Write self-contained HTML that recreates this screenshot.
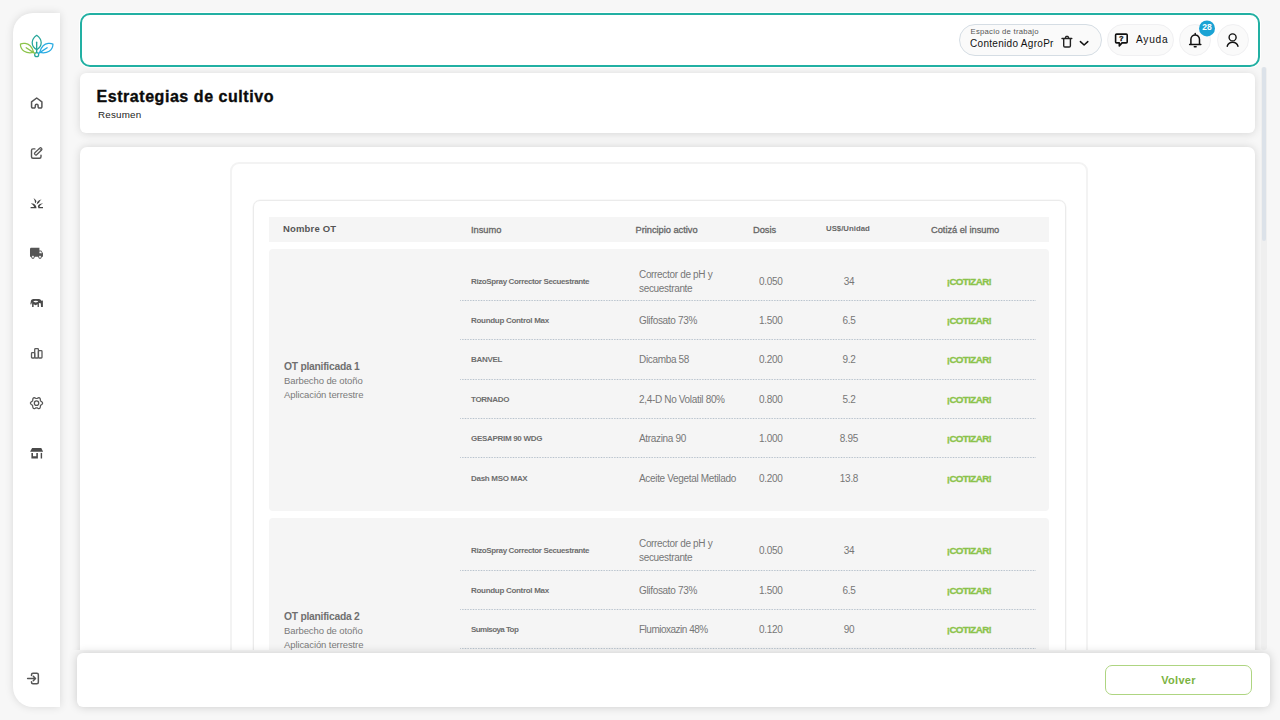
<!DOCTYPE html>
<html lang="es">
<head>
<meta charset="utf-8">
<title>Estrategias de cultivo</title>
<style>
*{box-sizing:border-box;margin:0;padding:0}
html,body{width:1280px;height:720px;overflow:hidden;background:#f7f7f7;font-family:"Liberation Sans",sans-serif;color:#111}
#sidebar{position:absolute;left:13px;top:13px;width:47px;height:694px;background:#fff;border-radius:20px 0 0 20px;box-shadow:0 0 8px rgba(0,0,0,.13)}
#sidebar svg{position:absolute;display:block}
#header{position:absolute;left:80px;top:13px;width:1180px;height:54px;background:#fff;border:2px solid #22b0a3;border-radius:10px;box-shadow:0 0 0 1px rgba(255,255,255,.9)}

#header .pill{position:absolute;top:9px;height:32px;border-radius:16px;background:#fafafa;border:1px solid #f0f0f2}
#ws{left:877px;width:143px;border-color:#d5dde4 !important}
#ws .lbl{position:absolute;left:10.5px;top:2px;font-size:7.7px;line-height:9px;color:#555;white-space:nowrap;letter-spacing:.26px}
#ws .val{position:absolute;left:10px;top:12px;width:84px;overflow:hidden;font-size:10px;line-height:14px;color:#111;white-space:nowrap;letter-spacing:.3px}
#help{left:1025px;width:67px}
#help span{position:absolute;left:28px;top:7.9px;font-size:10.2px;line-height:14px;color:#111;letter-spacing:.72px}
#bell{left:1097px;width:32px}
#user{left:1135px;width:32px}
#badge{position:absolute;left:1117px;top:5px;transform:translateY(.45px);width:16px;height:16px;border-radius:8px;background:#1aa3d4;color:#fff;font-weight:bold;font-size:8.5px;line-height:15.4px;text-align:center;letter-spacing:-.1px}
#hicons{position:absolute;left:-82px;top:-15px;width:1280px;height:80px;pointer-events:none}
#scroll{position:absolute;left:66px;top:67px;width:1204px;height:583px;overflow:hidden}
#titlecard{position:absolute;left:14px;top:6px;width:1175px;height:60px;background:#fff;border-radius:6px;box-shadow:0 1px 9px rgba(0,0,0,.13)}
#maincard{position:absolute;left:14px;top:80px;width:1175px;height:640px;background:#fff;border-radius:7px;box-shadow:0 0 8px rgba(0,0,0,.14)}

#titlecard h1{position:absolute;left:16.5px;top:14px;font-size:16px;line-height:20px;font-weight:bold;color:#0b0b0b;white-space:nowrap;letter-spacing:.55px;-webkit-text-stroke:.35px #0b0b0b}
#titlecard p{position:absolute;left:18px;top:35px;font-size:9.8px;line-height:14px;color:#222;white-space:nowrap;letter-spacing:.2px}
#card1{position:absolute;left:150px;top:15px;width:858px;height:700px;border:2px solid #f3f3f3;border-radius:9px}
#card2{position:absolute;left:21px;top:36px;width:813px;height:700px;border:1px solid #ebebeb;border-radius:7px;box-shadow:0 0 0 .5px #f3f3f3}
#thead{position:absolute;left:15px;top:16px;width:780px;height:25px;background:#f5f5f5;font-size:9.3px;line-height:26px;color:#666;-webkit-text-stroke:.3px #666;letter-spacing:-.03px}
#thead .pop{font-weight:bold;font-size:9.5px;line-height:24px;letter-spacing:.17px;-webkit-text-stroke:0;color:#555}
#thead span{position:absolute;top:0;white-space:nowrap}
.blk{position:absolute;left:15px;width:780px;background:#f5f5f5;border-radius:4px;padding-top:12.7px}
.ot{position:absolute;left:15px;color:#7a7a7a;font-size:9.5px;line-height:14px;white-space:nowrap;letter-spacing:-.1px;margin-top:1px}
.ot b{display:block;font-size:10.3px;line-height:15px;color:#707070;letter-spacing:-.25px}
.row{position:relative;margin-left:191px;width:576px;height:39.3px;border-bottom:1px solid transparent;font-size:10px;letter-spacing:-.3px;color:#777}
.row::after{content:"";position:absolute;left:.4px;right:0;bottom:-1px;height:1px;background:repeating-linear-gradient(90deg,rgba(128,148,168,.52) 0,rgba(128,148,168,.52) .3px,rgba(128,148,168,0) 1.5px,rgba(128,148,168,.52) 2.667px)}
.row.last::after{display:none}
.row.last span{margin-top:.8px}
.row span{position:absolute;white-space:nowrap;top:calc(50% + 1px);transform:translateY(-50%);line-height:14px}
.row .c1{left:11px;font-size:8px;font-weight:bold;color:#6e6e6e;letter-spacing:-.3px}
.row .c2{left:179px;letter-spacing:-.33px}
.row .c3{left:299px}
.row .c4{left:339px;width:100px;text-align:center}
.row .c5{left:459px;width:100px;text-align:center;font-weight:bold;color:#8bc34a;letter-spacing:-.62px;font-size:9.8px;-webkit-text-stroke:.3px #8bc34a}
#track{position:absolute;left:1261px;top:67px;width:6px;height:583px;border-radius:3px;background:#efefef}
#thumb{position:absolute;left:1262px;top:67px;width:4px;height:174px;border-radius:2px;background:#dce2e9}
#footer{position:absolute;left:77px;top:653px;width:1193px;height:54px;background:#fff;border-radius:6px;box-shadow:0 0 10px rgba(0,0,0,.18)}
#volver{position:absolute;left:1028px;top:12px;width:147px;height:30px;border:1px solid #aed581;border-radius:7px;color:#7cb342;font-weight:bold;font-size:11px;line-height:28px;text-align:center;letter-spacing:.3px}
</style>
</head>
<body>
<div id="sidebar">
<svg viewBox="13 13 47 694" width="47" height="694" style="left:0;top:0" fill="none" stroke-linecap="round" stroke-linejoin="round">
  <!-- logo -->
  <g stroke-width="1.25">
    <path stroke="#26a69a" d="M36.67 35.3C39.4 37.3 41.2 39.8 41.2 42.6C41.2 45.8 39.2 48.3 36.67 49.7C34.100 48.3 32.2 45.8 32.2 42.6C32.2 39.8 33.9 37.3 36.67 35.3Z"/>
    <path stroke="#26a69a" stroke-width="1.35" d="M36.67 42.2V52.5"/>
    <circle stroke="#26a69a" cx="36.67" cy="54.7" r="2"/>
    <path stroke="#8bc34a" d="M20.4 44.1C23 42.8 27.3 43.1 30.2 45.8C32.1 47.7 33.1 50 33.6 52.4C30.8 53 27 53 24.2 51.3C21.6 49.7 20.3 47 20.4 44.1Z"/>
    <path stroke="#8bc34a" stroke-width="1.35" d="M26.2 47.8L34.8 53.4"/>
    <path stroke="#29abe2" d="M52.94 44.1C50.34 42.8 46.04 43.1 43.14 45.8C41.24 47.7 40.24 50 39.74 52.4C42.54 53 46.34 53 49.14 51.3C51.74 49.7 53.04 47 52.94 44.1Z"/>
    <path stroke="#29abe2" stroke-width="1.35" d="M47.14 47.8L38.54 53.4"/>
  </g>
  <!-- home -->
  <path stroke="#555" stroke-width="1.5" d="M31.55 101.9L36.7 98L41.9 101.9V106.8a1.2 1.2 0 0 1-1.2 1.2H39.3a1.2 1.2 0 0 1-1.2-1.2V105.6a1.4 1.4 0 0 0-2.8 0V106.8a1.2 1.2 0 0 1-1.2 1.2H32.75a1.2 1.2 0 0 1-1.2-1.2Z"/>
  <!-- edit -->
  <g stroke="#555" stroke-width="1.4">
    <path d="M34.9 148.9H33a1.5 1.5 0 0 0-1.5 1.5V156.7a1.5 1.5 0 0 0 1.5 1.5H39.5a1.5 1.5 0 0 0 1.5-1.5V155.1"/>
    <rect x="-4.5" y="-1.3" width="9" height="2.6" rx="1.1" transform="translate(38.2 151.4) rotate(-44)" stroke-width="1.3"/>
    <path d="M39.3 148.6L41.0 150.3" stroke-width="1"/>
  </g>
  <!-- grass -->
  <path fill="#444" stroke="none" transform="translate(29.36 195.8) scale(0.62)" d="M12 20H2v-2h5.75c-.73-2.55-2.72-4.58-5.26-5.35C2.98 12.55 3.49 12.5 4 12.5c4.14 0 7.5 3.36 7.5 7.5H12zm10-7.35c-.51-.1-1.02-.15-1.5-.15-3.02 0-5.62 1.79-6.8 4.37.45.98.73 2.04.78 3.13H22v-2h-5.75c.73-2.55 2.72-4.58 5.26-5.35h.49zM15.64 11.02c.78-2.09 2.23-3.84 4.09-5C15.44 6.16 12 9.67 12 14v.02c.95-1.27 2.2-2.3 3.64-3zM11.42 8.85C10.58 6.66 8.88 4.89 6.7 4 8.14 5.86 9 8.18 9 10.71c0 .21-.03.41-.04.61.43.24.83.52 1.22.82.21-1.18.65-2.29 1.24-3.29z"/>
  <!-- truck -->
  <path fill="#555" stroke="none" transform="translate(29.4 245.1) scale(0.59 0.68)" d="M20 8h-3V4H3c-1.1 0-2 .9-2 2v11h2c0 1.66 1.34 3 3 3s3-1.34 3-3h6c0 1.66 1.34 3 3 3s3-1.34 3-3h2v-5l-3-4zM6 18.500c-.83 0-1.500-.67-1.500-1.500s.67-1.500 1.500-1.500 1.500.67 1.500 1.500-.67 1.500-1.500 1.500zm13.500-9l1.960 2.500H17V9.500h2.500zm-1.500 9c-.83 0-1.500-.67-1.500-1.500s.67-1.500 1.500-1.500 1.500.67 1.500 1.500-.67 1.500-1.500 1.500z"/>
  <!-- cow -->
  <path fill="#4a4a4a" stroke="none" d="M30.3 304.3L31 300.6Q31.5 299 33.2 299H39Q40.6 299.2 41.4 300.8L42.9 300.6V307H41L40.8 303.500L39.9 303L38.9 303.300V307H37.6V304.2L35.500 305.300L33.6 304.2V307H32.100V302L31.2 304.6Z"/>
  <ellipse cx="35.8" cy="301.6" rx="2.4" ry="0.8" fill="#fff" stroke="none"/>
  <!-- bars -->
  <g stroke="#5a5a5a" stroke-width="1.3">
    <rect x="31.5" y="352.7" width="3.2" height="5.3" rx=".8"/>
    <rect x="34.7" y="348.6" width="3.7" height="9.4" rx=".8"/>
    <rect x="38.4" y="350.7" width="3.6" height="7.3" rx=".8"/>
  </g>
  <!-- gear -->
  <path stroke="#555" stroke-width="1.25" d="M42.6 403.1L42.4 403.9L41.7 404.5L41.0 405.0L40.5 405.4L40.4 406.1L40.3 406.9L40.1 407.8L39.6 408.4L38.8 408.6L37.9 408.3L37.2 407.9L36.5 407.8L35.9 407.9L35.2 408.3L34.3 408.6L33.5 408.4L33.0 407.8L32.8 406.9L32.7 406.1L32.6 405.4L32.1 405.0L31.4 404.5L30.7 403.9L30.4 403.1L30.7 402.4L31.4 401.8L32.1 401.3L32.6 400.8L32.7 400.2L32.8 399.4L33.0 398.5L33.5 397.9L34.3 397.7L35.2 398.0L35.9 398.4L36.5 398.5L37.2 398.4L37.9 398.0L38.8 397.7L39.6 397.9L40.1 398.5L40.3 399.4L40.4 400.2L40.5 400.8L41.0 401.3L41.7 401.8L42.4 402.4Z"/>
  <circle stroke="#555" stroke-width="1.25" cx="36.54" cy="403.15" r="2.2"/>
  <!-- store -->
  <g fill="#4a4a4a" stroke="none">
    <path d="M32.1 448H41.3L43.1 451.8H30.1Z"/>
    <path d="M31.4 452.9H33V456.2H36.3V452.9H37.9V458.5H31.4Z"/>
    <rect x="40.7" y="452.9" width="1.4" height="5.6"/>
  </g>
  <!-- logout -->
  <g stroke="#555" stroke-width="1.5">
    <path d="M31.5 675.4V674.8a1.5 1.5 0 0 1 1.5-1.5H36.85a1.5 1.5 0 0 1 1.5 1.5V682.3a1.5 1.5 0 0 1-1.5 1.5H33a1.5 1.5 0 0 1-1.5-1.5V681.7"/>
    <path d="M27.6 678.55H35.2M33.3 676.3L35.5 678.55L33.3 680.8"/>
  </g>
</svg>
</div>
<div id="header">
  <div class="pill" id="ws"><div class="lbl">Espacio de trabajo</div><div class="val">Contenido AgroPro</div></div>
  <div class="pill" id="help"><span>Ayuda</span></div>
  <div class="pill" id="bell"></div>
  <div class="pill" id="user"></div>
  <div id="badge">28</div>
  <svg id="hicons" viewBox="0 0 1280 80" fill="none" stroke="#111" stroke-linecap="round" stroke-linejoin="round">
    <path stroke="#222" stroke-width="1.4" d="M1062 38.5H1071.8M1065.2 38.3L1066 36.4H1068L1068.8 38.3M1063.7 38.6V45.8a1.2 1.2 0 0 0 1.2 1.2H1069.2a1.2 1.2 0 0 0 1.2-1.2V38.6"/>
    <path stroke-width="1.5" d="M1080.4 41.6L1084.1 45L1087.8 41.6"/>
    <path stroke-width="1.6" d="M1116.6 34.1H1126.2a1 1 0 0 1 1 1V41.9a1 1 0 0 1-1 1H1122L1119.3 45.9V42.9H1116.6a1 1 0 0 1-1-1V35.100a1 1 0 0 1 1-1Z"/>
    <text x="1121.4" y="41.2" text-anchor="middle" font-family="Liberation Sans, sans-serif" font-weight="bold" font-size="7.500" fill="#111" stroke="#111" stroke-width=".3">?</text>
    <path stroke-width="1.5" d="M1189.6 44.6H1200.800M1190.900 44.6V39.300a4.300 4.300 0 0 1 8.600 0V44.6M1195.2 33.400V34.6M1194.300 46.700H1196.100"/>
    <circle stroke-width="1.4" cx="1232.6" cy="37.4" r="3.5"/>
    <path stroke-width="1.4" d="M1227.2 46.300a5.600 5.600 0 0 1 10.800 0"/>
  </svg>
</div>
<div id="scroll">
  <div id="titlecard"><h1>Estrategias de cultivo</h1><p>Resumen</p></div>
  <div id="maincard">
<div id="card1"><div id="card2">
<div id="thead"><span style="left:14px" class="pop">Nombre OT</span><span style="left:202px">Insumo</span><span style="left:366.500px">Principio activo</span><span style="left:484px">Dosis</span><span style="left:557px;font-size:7.800px;font-weight:bold;-webkit-text-stroke:0;letter-spacing:0;line-height:23px">US$/Unidad</span><span style="left:662px">Cotizá el insumo</span></div>
<div class="blk" style="top:48px;height:262px">
<div class="ot" style="top:109px"><b>OT planificada 1</b>Barbecho de otoño<br>Aplicación terrestre</div>
<div class="row"><span class="c1" style="letter-spacing:-.38px">RizoSpray Corrector Secuestrante</span><span class="c2">Corrector de pH y<br>secuestrante</span><span class="c3">0.050</span><span class="c4">34</span><span class="c5">¡COTIZAR!</span></div>
<div class="row"><span class="c1">Roundup Control Max</span><span class="c2">Glifosato 73%</span><span class="c3">1.500</span><span class="c4">6.5</span><span class="c5">¡COTIZAR!</span></div>
<div class="row"><span class="c1">BANVEL</span><span class="c2">Dicamba 58</span><span class="c3">0.200</span><span class="c4">9.2</span><span class="c5">¡COTIZAR!</span></div>
<div class="row"><span class="c1">TORNADO</span><span class="c2">2,4-D No Volatil 80%</span><span class="c3">0.800</span><span class="c4">5.2</span><span class="c5">¡COTIZAR!</span></div>
<div class="row"><span class="c1">GESAPRIM 90 WDG</span><span class="c2">Atrazina 90</span><span class="c3">1.000</span><span class="c4">8.95</span><span class="c5">¡COTIZAR!</span></div>
<div class="row last"><span class="c1">Dash MSO MAX</span><span class="c2">Aceite Vegetal Metilado</span><span class="c3">0.200</span><span class="c4">13.8</span><span class="c5">¡COTIZAR!</span></div>
</div>
<div class="blk" style="top:317px;height:223px;padding-top:13.3px">
<div class="ot" style="top:90px"><b>OT planificada 2</b>Barbecho de otoño<br>Aplicación terrestre</div>
<div class="row"><span class="c1" style="letter-spacing:-.38px">RizoSpray Corrector Secuestrante</span><span class="c2">Corrector de pH y<br>secuestrante</span><span class="c3">0.050</span><span class="c4">34</span><span class="c5">¡COTIZAR!</span></div>
<div class="row"><span class="c1">Roundup Control Max</span><span class="c2">Glifosato 73%</span><span class="c3">1.500</span><span class="c4">6.5</span><span class="c5">¡COTIZAR!</span></div>
<div class="row"><span class="c1" style="letter-spacing:-.57px">Sumisoya Top</span><span class="c2" style="letter-spacing:-.5px">Flumioxazin 48%</span><span class="c3">0.120</span><span class="c4">90</span><span class="c5">¡COTIZAR!</span></div>
<div class="row"><span class="c1">TORNADO</span><span class="c2">2,4-D No Volatil 80%</span><span class="c3">0.800</span><span class="c4">5.2</span><span class="c5">¡COTIZAR!</span></div>
<div class="row last"><span class="c1">Dash MSO MAX</span><span class="c2">Aceite Vegetal Metilado</span><span class="c3">0.200</span><span class="c4">13.8</span><span class="c5">¡COTIZAR!</span></div>
</div>
</div></div>
</div>
</div>
<div id="track"></div>
<div id="thumb"></div>
<div id="footer"><div id="volver">Volver</div></div>
</body>
</html>
